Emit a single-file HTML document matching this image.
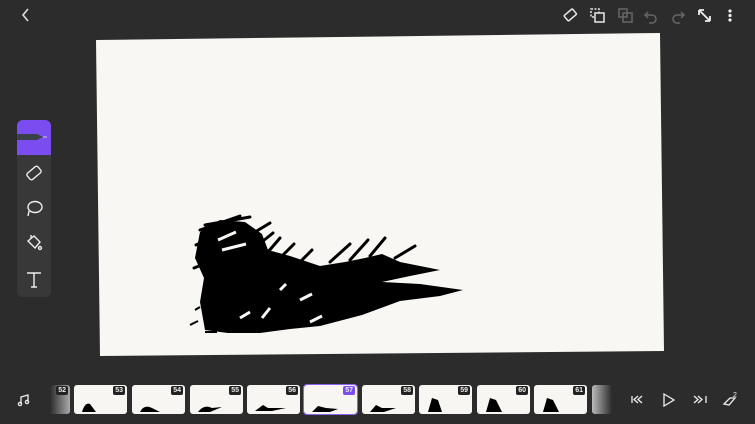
<!DOCTYPE html>
<html><head><meta charset="utf-8"><style>
html,body{margin:0;padding:0;width:755px;height:424px;overflow:hidden;background:#2c2c2c;font-family:"Liberation Sans",sans-serif}
.abs{position:absolute}
.th{position:absolute;top:385px;width:53px;height:29px;background:#f7f6f3;border-radius:3px;overflow:hidden}
.th .n{position:absolute;right:2px;top:1px;background:#222;color:#eee;font-size:7px;font-weight:bold;padding:0 2px;border-radius:2px;line-height:9px}
.th.sel{outline:1.5px solid #8a63f2}
.th.sel .n{background:#7b4cf0}
</style></head><body>
<svg class="abs" style="left:0;top:0" width="755" height="424">
<polygon points="96,40 660,33 664,351 100,356" fill="#f8f7f4"/>
<path d="M205,330 L200,302 L204,278 L195,258 L200,232 L220,220 L245,222 L262,234 L268,250 L290,256 L320,266 L345,262 L365,258 L382,254 L400,262 L440,270 L410,276 L382,282 L420,284 L463,290 L440,296 L400,301 L362,315 L320,326 L290,329 L260,333 L228,333 Z" fill="#000"/>
<g stroke="#000" stroke-width="3" stroke-linecap="round">
<path d="M200,230 l40,-14 M205,225 l45,-8 M196,245 l20,-10 M194,268 l15,-6 M250,235 l20,-12 M258,245 l15,-12 M268,252 l12,-14 M280,258 l14,-14 M300,262 l12,-12 M330,262 l20,-18 M350,260 l18,-20 M370,256 l15,-18 M395,258 l20,-12 M380,280 l20,-10"/>
</g>
<path d="M218,240 l18,-8 M222,250 l24,-6 M300,300 l12,-6 M240,318 l10,-6 M310,322 l12,-6 M262,318 l8,-10 M280,290 l6,-6" stroke="#f8f7f4" stroke-width="3"/>
<path d="M190,325 l8,-4 M205,332 l12,0 M195,310 l5,-3" stroke="#000" stroke-width="2"/>
<path d="M28,9 l-5,6 l5,6" stroke="#ddd" stroke-width="1.6" fill="none"/>
<g stroke="#e8e8e8" stroke-width="1.5" fill="none">
<rect x="565" y="11" width="11" height="7" transform="rotate(-40 571 15)" rx="1"/>
<rect x="591" y="9" width="8" height="8" stroke-dasharray="2 1.5"/><rect x="595" y="13" width="9" height="9" fill="#2c2c2c"/>
</g>
<g stroke="#666" stroke-width="1.5" fill="none">
<rect x="619" y="9" width="8" height="8"/><rect x="623" y="13" width="9" height="9"/>
<path d="M648,12 l-3,3 l3,3 M645,15 h7 a4,4 0 0 1 0,8 h-3"/>
<path d="M681,12 l3,3 l-3,3 M684,15 h-7 a4,4 0 0 0 0,8 h3"/>
</g>
<path d="M699,10 l11,11 M699,10 h5 M699,10 v5 M710,21 h-5 M710,21 v-5" stroke="#eee" stroke-width="1.8" fill="none"/>
<g fill="#eee"><circle cx="730" cy="11" r="1.6"/><circle cx="730" cy="15.5" r="1.6"/><circle cx="730" cy="20" r="1.6"/></g>
<rect x="17" y="120" width="34" height="177" rx="6" fill="#383838"/>
<path d="M17,126 a6,6 0 0 1 6,-6 h22 a6,6 0 0 1 6,6 v29 h-34 z" fill="#7b4cf0"/>
<path d="M17,134 h20 l6,3 l-6,3 h-20 z" fill="#3a4147"/><path d="M43,137 h4" stroke="#ccc"/>
<g stroke="#eee" stroke-width="1.4" fill="none">
<rect x="27" y="169" width="14" height="8" rx="2" transform="rotate(-40 34 173)"/>
<ellipse cx="35" cy="207" rx="7" ry="5.5"/><path d="M29,211 l-1,5"/>
<path d="M28,241 l6,-5 l6,6 l-5,6 z M31,238 l0,-3"/><circle cx="40" cy="248" r="1.5"/>
<path d="M27,273 h14 M34,273 v14 M31,287 h6"/>
</g>
<g stroke="#eee" stroke-width="1.3" fill="none">
<path d="M21,404 v-7 l7,-2 v7"/><circle cx="20" cy="404" r="1.6"/><circle cx="27" cy="402" r="1.6"/>
<path d="M632,396 v7 M642,396 l-4,3.5 l4,3.5 M638,396 l-4,3.5 l4,3.5"/>
<path d="M664,394 l10,6 l-10,6 z"/>
<path d="M706,396 v7 M694,396 l4,3.5 l-4,3.5 M698,396 l4,3.5 l-4,3.5"/>
<path d="M724,404 l6,-6 h5 l-6,7 z"/>
</g>
<text x="733" y="397" font-size="7" fill="#eee">2</text>
</svg>
<div class="th" style="left:50px;width:20px;background:linear-gradient(90deg,#2c2c2c,#aaa)"><span class="n">52</span></div>
<div class="th" style="left:74px"><span class="n">53</span></div>
<div class="th" style="left:132px"><span class="n">54</span></div>
<div class="th" style="left:190px"><span class="n">55</span></div>
<div class="th" style="left:247px"><span class="n">56</span></div>
<div class="th sel" style="left:304px"><span class="n">57</span></div>
<div class="th" style="left:362px"><span class="n">58</span></div>
<div class="th" style="left:419px"><span class="n">59</span></div>
<div class="th" style="left:477px"><span class="n">60</span></div>
<div class="th" style="left:534px"><span class="n">61</span></div>
<div class="th" style="left:592px;width:20px;background:linear-gradient(90deg,#bbb,#2c2c2c)"></div>
<svg class="abs" style="left:0;top:385px" width="612" height="29">
<g fill="#000">
<path d="M82,27 q3,-10 8,-8 l6,8 z"/><path d="M140,27 q4,-8 12,-4 l8,4 z"/><path d="M198,27 q6,-8 14,-4 l10,-1 l-12,5 z"/>
<path d="M255,26 l8,-6 l5,3 l18,0 l-14,3 z"/><path d="M312,27 l6,-6 l8,2 l12,1 l-8,3 z"/><path d="M370,27 l6,-7 l6,3 l14,0 l-12,4 z"/>
<path d="M428,27 l4,-14 l6,2 l4,12 z"/><path d="M486,27 l4,-14 l6,2 l6,12 z"/><path d="M543,27 l4,-14 l6,2 l6,12 z"/>
</g></svg>
</body></html>
